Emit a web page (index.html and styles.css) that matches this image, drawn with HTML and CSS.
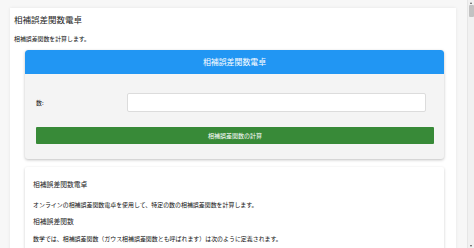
FILE: index.html
```html
<!DOCTYPE html>
<html lang="ja">
<head>
<meta charset="utf-8">
<title>相補誤差関数電卓</title>
<link rel="stylesheet" href="styles.css">
</head>
<body>
<div class="page">
  <h1 class="title">相補誤差関数電卓</h1>
  <p class="lead">相補誤差関数を計算します。</p>
  <div class="cards">
    <section class="calc">
      <div class="calc-head">相補誤差関数電卓</div>
      <div class="calc-body">
        <div class="row">
          <label class="label" for="num">数:</label>
          <input class="input" id="num" type="text">
        </div>
        <button class="btn" type="button">相補誤差関数の計算</button>
      </div>
    </section>
    <section class="info">
      <h2 class="info-h">相補誤差関数電卓</h2>
      <p class="info-p">オンラインの相補誤差関数電卓を使用して、特定の数の相補誤差関数を計算します。</p>
      <h2 class="info-h info-h2">相補誤差関数</h2>
      <p class="info-p info-p2">数学では、相補誤差関数（ガウス相補誤差関数とも呼ばれます）は次のように定義されます。</p>
    </section>
  </div>
</div>
<div class="scrollbar" aria-hidden="true">
  <span class="sb-up">▴</span>
  <span class="sb-thumb"></span>
  <span class="sb-down">▾</span>
</div>
</body>
</html>
```
FILE: styles.css
```css
body {
  margin: 0;
  background: #f7f7f7;
  font-family: "Noto Sans CJK JP", "Noto Sans", sans-serif;
  color: #111;
}
.page {
  margin: 8px 18px 0 10px;
  padding: 4px 0 40px 4px;
  background: #fff;
  box-shadow: 0 0 3px rgba(0, 0, 0, 0.08);
}
.title {
  margin: 0;
  font-size: 8.5px;
  line-height: 14px;
  font-weight: 400;
  color: #222;
}
.lead {
  margin: 8px 0 0;
  font-size: 5.9px;
  line-height: 10px;
}
.cards {
  margin: 6px 12px 0 11px;
  display: flex;
  flex-direction: column;
  gap: 8px;
}
.calc {
  border-radius: 3px;
  background: #f4f4f4;
  box-shadow: 0 1px 3px rgba(0, 0, 0, 0.25);
  overflow: hidden;
}
.calc-head {
  background: #2196f3;
  color: #fff;
  text-align: center;
  font-size: 7.9px;
  line-height: 24px;
  border-radius: 3px 3px 0 0;
}
.calc-body {
  padding: 19px 10px 15px 11px;
  display: flex;
  flex-direction: column;
  gap: 15px;
}
.row {
  display: flex;
  align-items: center;
  margin-right: 8px;
}
.label {
  width: 91px;
  flex: none;
  font-size: 5.9px;
  line-height: 10px;
}
.input {
  flex: 1;
  height: 19px;
  box-sizing: border-box;
  margin: 0;
  border: 1px solid #dcdcdc;
  border-radius: 2px;
  background: #fff;
}
.btn {
  height: 17px;
  margin: 0;
  border: 0;
  border-radius: 1px;
  background: #388a38;
  color: #fff;
  font-family: inherit;
  font-size: 6px;
  line-height: 17px;
  padding: 0;
}
.info {
  background: #fff;
  border-radius: 2px;
  box-shadow: 0 1px 3px rgba(0, 0, 0, 0.2);
  padding: 10px 8px 20px;
}
.info-h {
  margin: 0;
  font-size: 6.8px;
  line-height: 14px;
  font-weight: 400;
  color: #222;
}
.info-p {
  margin: 9px 0 0;
  font-size: 5.95px;
  line-height: 10px;
}
.info-h2 {
  margin-top: 4px;
}
.info-p2 {
  margin-top: 6px;
}
.scrollbar {
  position: fixed;
  top: 0;
  right: 0;
  bottom: 0;
  width: 6px;
  background: #f1f1f1;
  border-left: 1px solid #e6e6e6;
  display: flex;
  flex-direction: column;
  align-items: center;
}
.sb-up,
.sb-down {
  font-size: 4px;
  line-height: 5px;
  color: #555;
}
.sb-thumb {
  width: 5px;
  height: 12px;
  background: #c2c2c2;
  border-radius: 1px;
}
.sb-down {
  margin-top: auto;
}
```
